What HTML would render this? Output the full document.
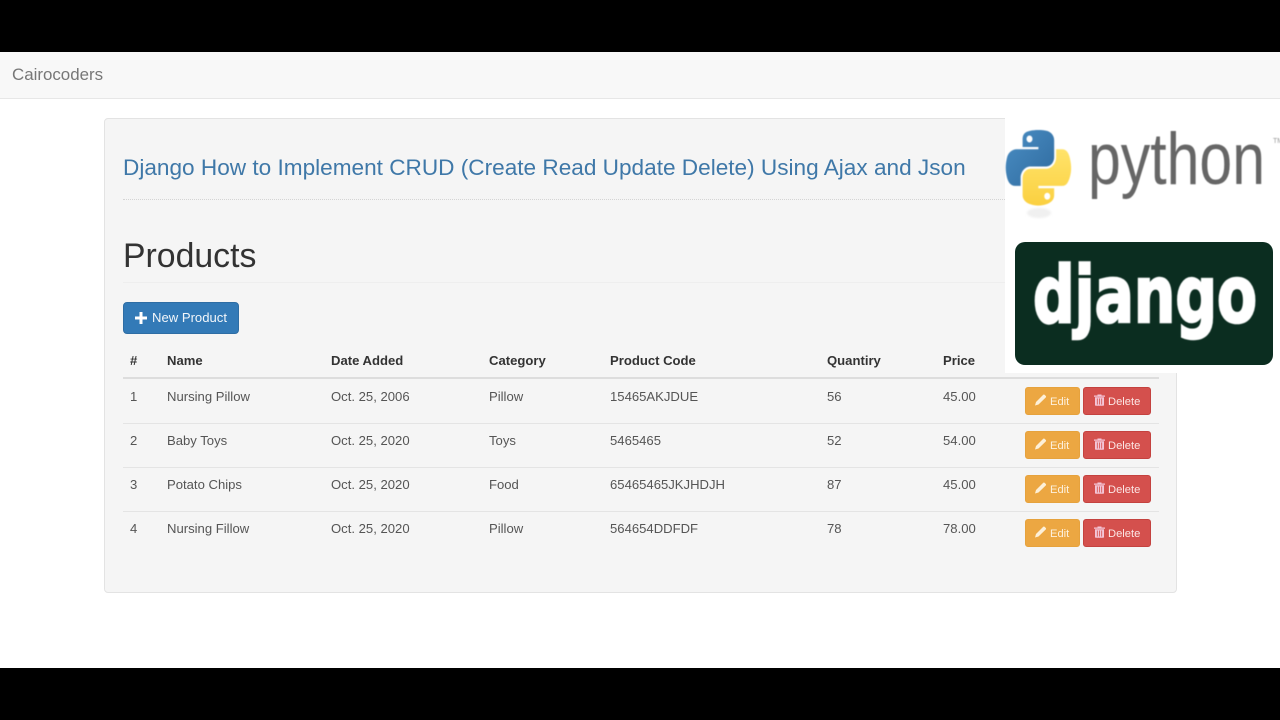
<!DOCTYPE html>
<html><head><meta charset="utf-8"><style>
html,body{margin:0;padding:0;background:#000}
#p{position:relative;width:1280px;height:720px;overflow:hidden;background:#000;font-family:"Liberation Sans",sans-serif;color:#333}
#p div{position:absolute;box-sizing:border-box}
.t{white-space:nowrap;font-size:13.1px;line-height:16px;color:#555;margin-top:1px}
.th{white-space:nowrap;font-size:13.1px;line-height:16px;font-weight:bold;color:#333}
.l{left:123px;width:1036px;height:1px;background:#e4e4e4}
.be{left:1025px;width:55px;height:28px;background:#eca742;border:1px solid #e6a23d;border-radius:3px;color:#fdf0dc;font-size:11.2px;line-height:28px;padding-left:24px}
.bd{left:1083px;width:68px;height:28px;background:#d4504d;border:1px solid #c4423f;border-radius:3px;color:#fbe6e5;font-size:11.2px;line-height:28px;padding-left:24px}
svg{position:absolute;overflow:visible}
</style></head><body><div id="p">
<div style="left:0;top:52px;width:1280px;height:616px;background:#fff"></div>
<div style="left:0;top:52px;width:1280px;height:47px;background:#f8f8f8;border-bottom:1px solid #e7e7e7"></div>
<div class="t" style="left:12px;top:64px;font-size:16.9px;line-height:20px;color:#777">Cairocoders</div>
<div style="left:104px;top:118px;width:1073px;height:475px;background:#f5f5f5;border:1px solid #e3e3e3;border-radius:4px"></div>
<div class="t" style="left:123px;top:153px;font-size:22.6px;line-height:28px;color:#3f78a8">Django How to Implement CRUD (Create Read Update Delete) Using Ajax and Json</div>
<div style="left:123px;top:199px;width:882px;border-top:1px dotted #d4d4d4;height:1px"></div>
<div class="t" style="left:123px;top:235px;font-size:33.8px;line-height:40px;color:#333">Products</div>
<div style="left:123px;top:282px;width:882px;height:1px;background:#eee"></div>
<div style="left:123px;top:302px;width:116px;height:32px;background:#337ab7;border:1px solid #2e6da4;border-radius:4px"></div>
<svg style="left:135px;top:312px" width="12" height="12"><path d="M4.5 0h3v4.500H12v3H7.500V12h-3V7.500H0v-3h4.500z" fill="#fff"/></svg>
<div class="t" style="left:152px;top:309px;color:#f2f6fa">New Product</div>

<div class="th" style="left:130px;top:353px">#</div>
<div class="th" style="left:167px;top:353px">Name</div>
<div class="th" style="left:331px;top:353px">Date Added</div>
<div class="th" style="left:489px;top:353px">Category</div>
<div class="th" style="left:610px;top:353px">Product Code</div>
<div class="th" style="left:827px;top:353px">Quantiry</div>
<div class="th" style="left:943px;top:353px">Price</div>
<div class="l" style="top:377px;height:2px;background:#ddd"></div>
<div class="l" style="top:423px"></div>
<div class="l" style="top:467px"></div>
<div class="l" style="top:511px"></div>

<div class="t" style="left:130px;top:388px">1</div><div class="t" style="left:167px;top:388px">Nursing Pillow</div><div class="t" style="left:331px;top:388px">Oct. 25, 2006</div><div class="t" style="left:489px;top:388px">Pillow</div><div class="t" style="left:610px;top:388px">15465AKJDUE</div><div class="t" style="left:827px;top:388px">56</div><div class="t" style="left:943px;top:388px">45.00</div>
<div class="t" style="left:130px;top:432px">2</div><div class="t" style="left:167px;top:432px">Baby Toys</div><div class="t" style="left:331px;top:432px">Oct. 25, 2020</div><div class="t" style="left:489px;top:432px">Toys</div><div class="t" style="left:610px;top:432px">5465465</div><div class="t" style="left:827px;top:432px">52</div><div class="t" style="left:943px;top:432px">54.00</div>
<div class="t" style="left:130px;top:476px">3</div><div class="t" style="left:167px;top:476px">Potato Chips</div><div class="t" style="left:331px;top:476px">Oct. 25, 2020</div><div class="t" style="left:489px;top:476px">Food</div><div class="t" style="left:610px;top:476px">65465465JKJHDJH</div><div class="t" style="left:827px;top:476px">87</div><div class="t" style="left:943px;top:476px">45.00</div>
<div class="t" style="left:130px;top:520px">4</div><div class="t" style="left:167px;top:520px">Nursing Fillow</div><div class="t" style="left:331px;top:520px">Oct. 25, 2020</div><div class="t" style="left:489px;top:520px">Pillow</div><div class="t" style="left:610px;top:520px">564654DDFDF</div><div class="t" style="left:827px;top:520px">78</div><div class="t" style="left:943px;top:520px">78.00</div>

<svg width="0" height="0" style="left:0;top:0"><defs>
<g id="pen"><path d="M0 11.500l1-3.500L8 1c.6-.6 1.200-.6 1.700-.1l1 1c.5.5.5 1.100-.1 1.700L3.500 10.500z" fill="#fdf0d8"/></g>
<g id="bin"><path d="M3.500 1.500V.5h4v1H11v1.200H0V1.500zM1 3.200h9V11c0 .4-.3.7-.7.7H1.700c-.4 0-.7-.3-.7-.7z" fill="#f3c6d8"/><path d="M3.300 4.500v6M5.500 4.500v6M7.700 4.500v6" stroke="#d4504d" stroke-width=".8"/></g>
</defs></svg>

<div class="be" style="top:387px">Edit</div><div class="bd" style="top:387px">Delete</div>
<div class="be" style="top:431px">Edit</div><div class="bd" style="top:431px">Delete</div>
<div class="be" style="top:475px">Edit</div><div class="bd" style="top:475px">Delete</div>
<div class="be" style="top:519px">Edit</div><div class="bd" style="top:519px">Delete</div>
<svg style="left:1035px;top:394px" width="12" height="12"><use href="#pen"/></svg><svg style="left:1094px;top:394px" width="11" height="12"><use href="#bin"/></svg>
<svg style="left:1035px;top:438px" width="12" height="12"><use href="#pen"/></svg><svg style="left:1094px;top:438px" width="11" height="12"><use href="#bin"/></svg>
<svg style="left:1035px;top:482px" width="12" height="12"><use href="#pen"/></svg><svg style="left:1094px;top:482px" width="11" height="12"><use href="#bin"/></svg>
<svg style="left:1035px;top:526px" width="12" height="12"><use href="#pen"/></svg><svg style="left:1094px;top:526px" width="11" height="12"><use href="#bin"/></svg>

<div style="left:1005px;top:118px;width:275px;height:255px;background:#fff"></div>
<div style="left:1177px;top:373px;width:103px;height:220px;background:#fff"></div>
<svg style="left:1006px;top:130px;filter:blur(.5px)" width="65" height="74" viewBox="0 0 110.400 110" preserveAspectRatio="none">
<defs><linearGradient id="b" x1="0" y1="0" x2="1" y2="1"><stop offset="0" stop-color="#4a8ec4"/><stop offset="1" stop-color="#2f6a9e"/></linearGradient>
<linearGradient id="y" x1="0" y1="0" x2="0" y2="1"><stop offset="0" stop-color="#ffe36a"/><stop offset="1" stop-color="#fbd040"/></linearGradient></defs>
<g transform="translate(-.5 0)">
<path fill-rule="evenodd" fill="url(#b)" d="M54.919 0.001c-4.584.022-8.961.413-12.813 1.095C30.760 3.099 28.700 7.295 28.700 15.032v10.219h26.813v3.406H18.638c-7.793 0-14.616 4.684-16.750 13.594-2.462 10.213-2.571 16.586 0 27.250 1.906 7.938 6.457 13.594 14.250 13.594h9.219v-12.250c0-8.850 7.657-16.656 16.750-16.656h26.781c7.454 0 13.406-6.138 13.406-13.625V15.032c0-7.266-6.130-12.725-13.406-13.937C64.282.328 59.502-.020 54.919.001zM40.419 8.219c2.770 0 5.031 2.299 5.031 5.125 0 2.816-2.262 5.094-5.031 5.094-2.779 0-5.031-2.277-5.031-5.094 0-2.826 2.252-5.125 5.031-5.125z"/>
<path fill-rule="evenodd" fill="url(#y)" d="M85.638 28.657v11.906c0 9.231-7.826 17-16.750 17H42.106c-7.336 0-13.406 6.278-13.406 13.625v25.531c0 7.266 6.319 11.540 13.406 13.625 8.487 2.496 16.626 2.947 26.781 0 6.750-1.954 13.406-5.888 13.406-13.625V86.500H55.513v-3.405h40.188c7.793 0 10.696-5.436 13.406-13.594 2.800-8.399 2.680-16.476 0-27.250-1.926-7.757-5.604-13.594-13.406-13.594zM70.575 93.313c2.779 0 5.031 2.277 5.031 5.094 0 2.826-2.252 5.125-5.031 5.125-2.770 0-5.031-2.299-5.031-5.125 0-2.816 2.262-5.094 5.031-5.094z"/>
</g></svg>
<div style="left:1027px;top:208px;width:24px;height:10px;background:#f0f0f0;border-radius:50%;filter:blur(1px)"></div>
<svg style="left:1080px;top:120px;filter:blur(.4px)" width="200" height="100">
<text x="8" y="64" font-family="'Liberation Sans',sans-serif" font-size="73" fill="#666" textLength="177" lengthAdjust="spacingAndGlyphs">python</text>
<text x="193" y="23" font-family="'Liberation Sans',sans-serif" font-size="7" fill="#999">TM</text>
</svg>
<div style="left:1015px;top:242px;width:258px;height:123px;background:#0b2d20;border-radius:10px"></div>
<svg style="left:1015px;top:242px;filter:blur(.4px)" width="258" height="123">
<text x="18" y="80" font-family="'DejaVu Sans',sans-serif" font-weight="bold" font-size="78" fill="#fff" stroke="#fff" stroke-width="2.500" textLength="224" lengthAdjust="spacingAndGlyphs">django</text>
</svg>
</div></body></html>
